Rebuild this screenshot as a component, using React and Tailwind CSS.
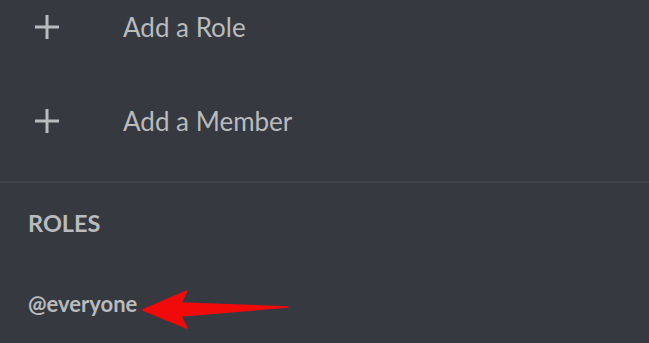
function PlusIcon() {
  return (
    <svg width="26" height="26" viewBox="0 0 26 26" className="shrink-0">
      <path d="M13 1v24M1 13h24" stroke="#b9bbbe" strokeWidth="3" />
    </svg>
  )
}

function ActionRow({ label, className = '' }) {
  return (
    <div className={`flex items-center h-[54px] pl-[34px] ${className}`}>
      <PlusIcon />
      <span className="ml-[63px] text-[26px] leading-none text-[#b9bbbe]">{label}</span>
    </div>
  )
}

export default function App() {
  return (
    <div className="relative w-[649px] h-[343px] overflow-hidden bg-[#36393f] font-['Lato',sans-serif]">
      <ActionRow label="Add a Role" />
      <ActionRow label="Add a Member" className="mt-[40px]" />

      <div className="mt-[33px] h-[2px] bg-[#3f4249]" />

      <div className="mt-[29px] pl-[28px] text-[23.5px] leading-none font-bold text-[#b9bbbe]">ROLES</div>

      <div className="mt-[57px] pl-[28px] text-[22px] leading-none font-bold text-[#b9bbbe]">@everyone</div>

      {/* red annotation arrow */}
      <svg className="absolute left-0 top-0" width="649" height="343" viewBox="0 0 649 343">
        <path
          d="M143 310 L187 291 Q184 297 181 303 L288 307 L181 316 Q184 322 187 328 Z"
          fill="#f20a0a"
          stroke="#f20a0a"
          strokeWidth="1.5"
          strokeLinejoin="round"
        />
      </svg>
    </div>
  )
}
